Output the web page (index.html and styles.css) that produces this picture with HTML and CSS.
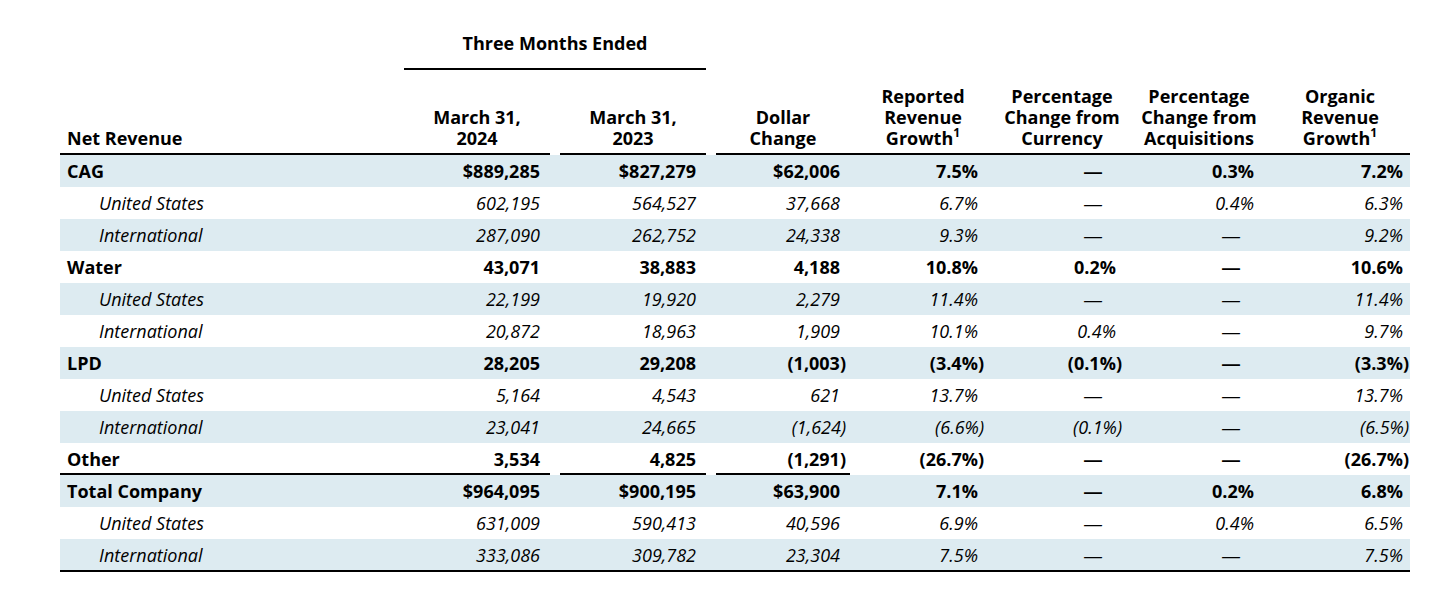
FILE: index.html
```html
<!DOCTYPE html>
<html lang="en">
<head>
<meta charset="utf-8">
<title>Net Revenue</title>
<link rel="stylesheet" href="styles.css">
</head>
<body>
<div class="wrap">
<table class="rev">
  <colgroup>
    <col class="w-label"><col class="w-num"><col class="w-gap"><col class="w-num"><col class="w-gap">
    <col class="w-dollar"><col class="w-rep"><col class="w-cur"><col class="w-acq"><col class="w-org">
  </colgroup>
  <thead>
    <tr class="top">
      <td></td>
      <th colspan="3" class="period">Three Months Ended</th>
      <td></td><td></td><td></td><td></td><td></td><td></td>
    </tr>
    <tr class="heads">
      <th class="lbl">Net Revenue</th>
      <th>March 31,<br>2024</th>
      <td class="gap"></td>
      <th>March 31,<br>2023</th>
      <td class="gap"></td>
      <th>Dollar<br>Change</th>
      <th>Reported<br>Revenue<br>Growth<sup>1</sup></th>
      <th>Percentage<br>Change from<br>Currency</th>
      <th>Percentage<br>Change from<br>Acquisitions</th>
      <th>Organic<br>Revenue<br>Growth<sup>1</sup></th>
    </tr>
  </thead>
  <tbody>
    <tr class="seg shade">
      <td class="lbl">CAG</td><td>$889,285</td><td></td><td>$827,279</td><td></td><td>$62,006</td><td>7.5%</td><td><span class="d">—</span></td><td>0.3%</td><td>7.2%</td>
    </tr>
    <tr class="geo">
      <td class="lbl">United States</td><td>602,195</td><td></td><td>564,527</td><td></td><td>37,668</td><td>6.7%</td><td><span class="d">—</span></td><td>0.4%</td><td>6.3%</td>
    </tr>
    <tr class="geo shade">
      <td class="lbl">International</td><td>287,090</td><td></td><td>262,752</td><td></td><td>24,338</td><td>9.3%</td><td><span class="d">—</span></td><td><span class="d">—</span></td><td>9.2%</td>
    </tr>
    <tr class="seg">
      <td class="lbl">Water</td><td>43,071</td><td></td><td>38,883</td><td></td><td>4,188</td><td>10.8%</td><td>0.2%</td><td><span class="d">—</span></td><td>10.6%</td>
    </tr>
    <tr class="geo shade">
      <td class="lbl">United States</td><td>22,199</td><td></td><td>19,920</td><td></td><td>2,279</td><td>11.4%</td><td><span class="d">—</span></td><td><span class="d">—</span></td><td>11.4%</td>
    </tr>
    <tr class="geo">
      <td class="lbl">International</td><td>20,872</td><td></td><td>18,963</td><td></td><td>1,909</td><td>10.1%</td><td>0.4%</td><td><span class="d">—</span></td><td>9.7%</td>
    </tr>
    <tr class="seg shade">
      <td class="lbl">LPD</td><td>28,205</td><td></td><td>29,208</td><td></td><td>(1,003<span class="rp">)</span></td><td>(3.4%<span class="rp">)</span></td><td>(0.1%<span class="rp">)</span></td><td><span class="d">—</span></td><td>(3.3%<span class="rp">)</span></td>
    </tr>
    <tr class="geo">
      <td class="lbl">United States</td><td>5,164</td><td></td><td>4,543</td><td></td><td>621</td><td>13.7%</td><td><span class="d">—</span></td><td><span class="d">—</span></td><td>13.7%</td>
    </tr>
    <tr class="geo shade">
      <td class="lbl">International</td><td>23,041</td><td></td><td>24,665</td><td></td><td>(1,624<span class="rp">)</span></td><td>(6.6%<span class="rp">)</span></td><td>(0.1%<span class="rp">)</span></td><td><span class="d">—</span></td><td>(6.5%<span class="rp">)</span></td>
    </tr>
    <tr class="seg ruled">
      <td class="lbl">Other</td><td>3,534</td><td></td><td>4,825</td><td></td><td>(1,291<span class="rp">)</span></td><td>(26.7%<span class="rp">)</span></td><td><span class="d">—</span></td><td><span class="d">—</span></td><td>(26.7%<span class="rp">)</span></td>
    </tr>
    <tr class="seg shade">
      <td class="lbl">Total Company</td><td>$964,095</td><td></td><td>$900,195</td><td></td><td>$63,900</td><td>7.1%</td><td><span class="d">—</span></td><td>0.2%</td><td>6.8%</td>
    </tr>
    <tr class="geo">
      <td class="lbl">United States</td><td>631,009</td><td></td><td>590,413</td><td></td><td>40,596</td><td>6.9%</td><td><span class="d">—</span></td><td>0.4%</td><td>6.5%</td>
    </tr>
    <tr class="geo shade last">
      <td class="lbl">International</td><td>333,086</td><td></td><td>309,782</td><td></td><td>23,304</td><td>7.5%</td><td><span class="d">—</span></td><td><span class="d">—</span></td><td>7.5%</td>
    </tr>
  </tbody>
</table>
</div>
</body>
</html>
```

FILE: styles.css
```css
html, body {
  margin: 0;
  padding: 0;
  background: #ffffff;
}

body {
  font-family: "Open Sans", "Noto Sans", "Liberation Sans", sans-serif;
  font-size: 18px;
  color: #000000;
}

.wrap {
  padding: 33px 0 0 60px;
}

.rev {
  width: 1350px;
  table-layout: fixed;
  border-collapse: separate;
  border-spacing: 0;
}

.w-label { width: 344px; }
.w-num { width: 146px; }
.w-gap { width: 10px; }
.w-dollar { width: 134px; }
.w-rep { width: 146px; }
.w-cur { width: 132px; }
.w-acq { width: 142px; }
.w-org { width: 140px; }

.rev th,
.rev td {
  padding: 0;
  white-space: nowrap;
}

/* header */
.top td,
.top th {
  line-height: 21px;
  padding-bottom: 14px;
}

.period {
  font-weight: 700;
  text-align: center;
  border-bottom: 2px solid #000;
}

.heads th,
.heads td {
  font-weight: 700;
  text-align: center;
  vertical-align: bottom;
  line-height: 21px;
  padding: 16px 0 4px;
  border-bottom: 2px solid #000;
}

.heads .gap {
  border-bottom: 0;
}

.heads th.lbl {
  text-align: left;
  padding-left: 7px;
}

.heads sup {
  font-size: 12px;
  line-height: 0;
  vertical-align: 8px;
}

/* body */
.rev tbody td {
  height: 32px;
  line-height: 32px;
  vertical-align: top;
  text-align: right;
  box-sizing: border-box;
}

.rev tbody td.lbl {
  text-align: left;
}

.shade {
  background: #ddebf1;
}

.seg td {
  font-weight: 700;
}

.rev .seg td.lbl {
  padding-left: 7px;
}

.geo td {
  font-style: italic;
}

.rev .geo td.lbl {
  padding-left: 39px;
}

.rev tbody td:nth-child(2),
.rev tbody td:nth-child(4),
.rev tbody td:nth-child(6) {
  padding-right: 10px;
}

.rev tbody td:nth-child(7) { padding-right: 18px; }
.rev tbody td:nth-child(8) { padding-right: 12px; }
.rev tbody td:nth-child(9) { padding-right: 16px; }
.rev tbody td:nth-child(10) { padding-right: 7px; }

.rp {
  margin-right: -6px;
}

.d {
  font-family: "Liberation Sans", "Open Sans", sans-serif;
  line-height: 0;
  margin-right: 14px;
}

/* Other row: rules under first four columns */
.rev tbody .ruled td {
  height: 32px;
  padding-top: 2px;
  line-height: 28px;
}

.rev tbody .ruled td:nth-child(1),
.rev tbody .ruled td:nth-child(2),
.rev tbody .ruled td:nth-child(4),
.rev tbody .ruled td:nth-child(6) {
  border-bottom: 2px solid #000;
}

/* final rule */
.rev tbody .last td {
  height: 33px;
  padding-top: 2px;
  line-height: 29px;
  border-bottom: 2px solid #000;
}
```
